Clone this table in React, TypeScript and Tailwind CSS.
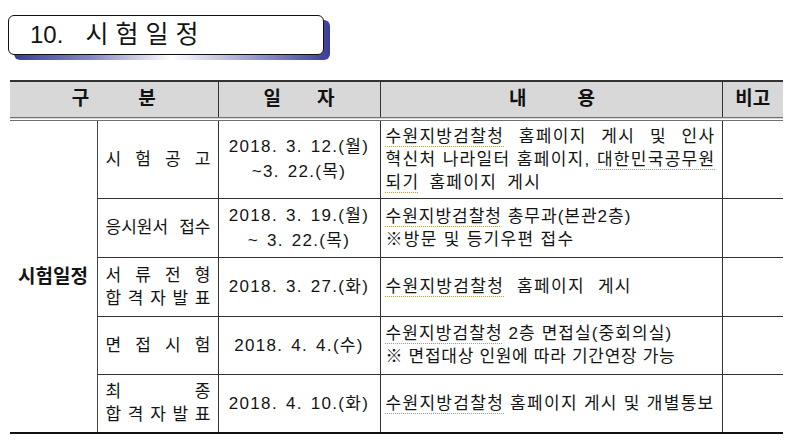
import { FC, JSX, ReactNode } from 'react';

const dotted =
  'underline decoration-dotted decoration-[#e69138] decoration-1 underline-offset-[4px]';

// 글자를 칸 전체에 고르게 배분 (배분 정렬)
const Spread: FC<{ text: string }> = ({ text }): JSX.Element => (
  <div className="flex justify-between">
    {[...text].map((c, i) => (
      <span key={i}>{c}</span>
    ))}
  </div>
);

type Row = {
  h: string;
  label: ReactNode;
  date: ReactNode;
  content: ReactNode;
};

const rows: Row[] = [
  {
    h: 'h-[79px]',
    label: <Spread text="시험공고" />,
    date: (
      <>
        <div>2018. 3. 12.(월)</div>
        <div>~3. 22.(목)</div>
      </>
    ),
    content: (
      <>
        <div className="flex justify-between">
          <span className={dotted}>수원지방검찰청</span>
          <span>홈페이지</span>
          <span>게시</span>
          <span>및</span>
          <span>인사</span>
        </div>
        <div className="flex justify-between">
          <span>혁신처</span>
          <span>나라일터</span>
          <span>홈페이지,</span>
          <span className={dotted}>대한민국공무원</span>
        </div>
        <div className="[word-spacing:4px]">
          <span className={dotted}>되기</span> 홈페이지 게시
        </div>
      </>
    ),
  },
  {
    h: 'h-[59px]',
    label: (
      <div className="flex justify-between">
        <span>응시원서</span>
        <span>접수</span>
      </div>
    ),
    date: (
      <>
        <div>2018. 3. 19.(월)</div>
        <div>~ 3. 22.(목)</div>
      </>
    ),
    content: (
      <>
        <div className="tracking-[1px]">
          <span className={dotted}>수원지방검찰청</span> 총무과(본관2층)
        </div>
        <div>※방문 및 등기우편 접수</div>
      </>
    ),
  },
  {
    h: 'h-[59px]',
    label: (
      <>
        <Spread text="서류전형" />
        <Spread text="합격자발표" />
      </>
    ),
    date: <div>2018. 3. 27.(화)</div>,
    content: (
      <div className="[word-spacing:7px]">
        <span className={dotted}>수원지방검찰청</span> 홈페이지 게시
      </div>
    ),
  },
  {
    h: 'h-[58px]',
    label: <Spread text="면접시험" />,
    date: <div>2018. 4. 4.(수)</div>,
    content: (
      <>
        <div className="tracking-[1.1px]">
          <span className={dotted}>수원지방검찰청</span> 2층 면접실(중회의실)
        </div>
        <div className="tracking-[0.7px]">※ 면접대상 인원에 따라 기간연장 가능</div>
      </>
    ),
  },
  {
    h: 'h-[59px]',
    label: (
      <>
        <Spread text="최종" />
        <Spread text="합격자발표" />
      </>
    ),
    date: <div>2018. 4. 10.(화)</div>,
    content: (
      <div>
        <span className={dotted}>수원지방검찰청</span> 홈페이지 게시 및 개별통보
      </div>
    ),
  },
];

const head =
  'bg-[#d8d8d8] border-t-2 border-t-[#333] border-b-4 border-double border-b-[#707070] p-0 font-bold text-[19px] text-[#111]';

const bottom = (i: number): string =>
  i === 4 ? 'border-b-2 border-b-[#111]' : 'border-b border-b-[#333]';

export default function App(): JSX.Element {
  return (
    <div className="w-[800px] h-[448px] bg-white font-['Liberation_Sans','Noto_Sans_CJK_KR',sans-serif] text-[#141414] overflow-hidden">
      {/* 제목 상자 */}
      <div className="relative ml-[8px] mt-[15px] w-[316px] h-[40px]">
        <div className="absolute left-[6px] top-[5px] w-full h-full rounded-[6px] bg-[linear-gradient(90deg,#3c3c9c_0%,#8a8ac8_25%,#ffffff_50%,#8a8ac8_80%,#3c3c9c_100%)]" />
        <div className="relative flex h-full items-center rounded-[6px] border border-[#111] bg-white pl-[21px] pb-[1px]">
          <span className="text-[24px] leading-none">10.</span>
          <span className="ml-[22px] text-[25px] leading-none tracking-[7px]">시험일정</span>
        </div>
      </div>

      {/* 일정표 */}
      <table className="ml-[10px] mt-[25px] w-[773px] table-fixed border-collapse">
        <colgroup>
          <col className="w-[87px]" />
          <col className="w-[121px]" />
          <col className="w-[162px]" />
          <col className="w-[342px]" />
          <col className="w-[61px]" />
        </colgroup>
        <thead>
          <tr className="h-[38px]">
            <th colSpan={2} className={`${head} border-r border-r-[#333]`}>
              <div className="flex justify-center gap-[49px]">
                <span>구</span>
                <span>분</span>
              </div>
            </th>
            <th className={`${head} border-r border-r-[#333]`}>
              <div className="flex justify-center gap-[36px]">
                <span>일</span>
                <span>자</span>
              </div>
            </th>
            <th className={`${head} border-r border-r-[#333]`}>
              <div className="flex justify-center gap-[51px] pl-[2px]">
                <span>내</span>
                <span>용</span>
              </div>
            </th>
            <th className={head}>비고</th>
          </tr>
        </thead>
        <tbody className="text-[17px] leading-[23px] tracking-[1.3px]">
          {rows.map((r, i) => (
            <tr key={i} className={r.h}>
              {i === 0 && (
                <td
                  rowSpan={5}
                  className="border-r border-r-[#444] border-b-2 border-b-[#111] p-0 pl-[8px] text-[19px] font-bold tracking-normal"
                >
                  시험일정
                </td>
              )}
              <td className={`border-r border-r-[#333] p-0 pl-[8px] pr-[7px] align-middle tracking-normal ${bottom(i)}`}>
                {r.label}
              </td>
              <td
                className={`border-r border-r-[#333] p-0 text-center align-middle leading-[25px] [word-spacing:2px] ${bottom(i)}`}
              >
                {r.date}
              </td>
              <td className={`border-r border-r-[#333] p-0 pl-[5px] pr-[6px] align-middle ${bottom(i)}`}>
                {r.content}
              </td>
              <td className={`p-0 ${bottom(i)}`} />
            </tr>
          ))}
        </tbody>
      </table>
    </div>
  );
}
